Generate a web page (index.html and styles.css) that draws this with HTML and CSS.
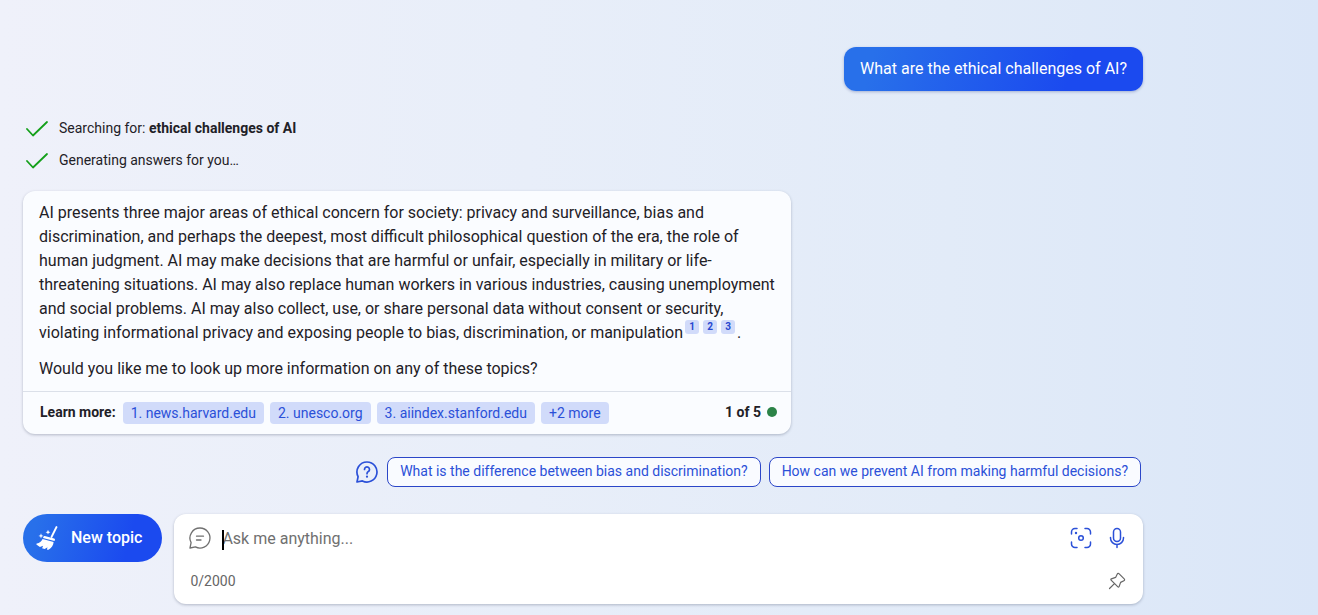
FILE: index.html
```html
<!DOCTYPE html>
<html lang="en">
<head>
<meta charset="utf-8">
<title>Chat</title>
<link rel="stylesheet" href="styles.css">
</head>
<body>
<main class="chat">
  <div class="user-message">What are the ethical challenges of AI?</div>

  <ul class="steps">
    <li class="step">
      <svg class="check" viewBox="0 0 24 18" aria-hidden="true"><path d="M1 10l6 6.500L21 3"/></svg>
      <span>Searching for: <strong>ethical challenges of AI</strong></span>
    </li>
    <li class="step">
      <svg class="check" viewBox="0 0 24 18" aria-hidden="true"><path d="M1 10l6 6.500L21 3"/></svg>
      <span>Generating answers for you…</span>
    </li>
  </ul>

  <article class="answer">
    <div class="answer-body">
      <p>AI presents three major areas of ethical concern for society: privacy and surveillance, bias and discrimination, and perhaps the deepest, most difficult philosophical question of the era, the role of human judgment. AI may make decisions that are harmful or unfair, especially in military or life-threatening situations. AI may also replace human workers in various industries, causing unemployment and social problems. AI may also collect, use, or share personal data without consent or security, violating informational privacy and exposing people to bias, discrimination, or manipulation<sup class="cites"><a class="cite" href="#">1</a><a class="cite" href="#">2</a><a class="cite" href="#">3</a></sup>.</p>
      <p>Would you like me to look up more information on any of these topics?</p>
    </div>
    <footer class="answer-footer">
      <strong class="learn">Learn more:</strong>
      <a class="source" href="#">1. news.harvard.edu</a>
      <a class="source" href="#">2. unesco.org</a>
      <a class="source" href="#">3. aiindex.stanford.edu</a>
      <button class="source" type="button">+2 more</button>
      <span class="turns">1 of 5<span class="dot"></span></span>
    </footer>
  </article>

  <div class="suggestions">
    <svg class="help" viewBox="0 0 24 24" aria-hidden="true"><path d="M12 2a10 10 0 1 1-4.600 18.900L2 22l1.100-5.400A10 10 0 0 1 12 2z"/><path d="M9.500 9.500a2.500 2.500 0 1 1 3.800 2.100c-.8.500-1.300 1-1.300 2.100"/><circle class="fill" cx="12" cy="16.700" r="1.100"/></svg>
    <button class="suggestion" type="button">What is the difference between bias and discrimination?</button>
    <button class="suggestion" type="button">How can we prevent AI from making harmful decisions?</button>
  </div>

  <form class="composer">
    <button class="new-topic" type="button">
      <svg class="broom" viewBox="0 0 26 26" aria-hidden="true"><path class="handle" d="M21.500 2L16.500 12"/><path class="fill" d="M9.800 10.900l9.300 2.600c.7.300 1 .8.800 1.500l-.4 1.100-11.500-3.200.4-1.200c.3-.6.800-.9 1.400-.8z"/><path class="fill" d="M7.600 14l11 3.100c-.2 2.900-1.800 5.700-4.700 7.400-.7.500-1.400.4-2 0l.6-2.200-2.800 1.700-2.600-.8 1-2.400-3.200 1.200-3.200-2.200c-.6-.5-.5-1.100.2-1.200 2.600-.5 4.400-1.900 5.700-4.600z"/><path class="fill" d="M13 4.800l.7 1.700 1.700.7-1.700.7-.7 1.700-.7-1.700-1.700-.7 1.700-.7zM6 8.300l.7 1.900 1.900.7-1.900.7-.7 1.900-.7-1.900-1.900-.7 1.900-.7z"/></svg>
      New topic
    </button>
    <div class="box">
      <div class="row">
        <svg class="icon muted" viewBox="2 1 22 22" aria-hidden="true"><path d="M12 2a10 10 0 1 1-4.600 18.900L2 22l1.100-5.400A10 10 0 0 1 12 2zM8.500 10.200h7M8.500 14h4.500"/></svg>
        <div class="field"><input class="prompt" type="text" aria-label="Ask me anything" placeholder="Ask me anything..."></div>
        <button class="tool" type="button" aria-label="Search by image"><svg class="icon" viewBox="0 0 24 24"><path d="M2.500 8V6A3.500 3.500 0 0 1 6 2.500H8M16 2.500h2A3.500 3.500 0 0 1 21.500 6V8M21.500 16v2a3.500 3.500 0 0 1-3.500 3.500H16M8 21.500H6A3.500 3.500 0 0 1 2.500 18V16"/><circle cx="12" cy="12" r="2.300"/><circle class="fill" cx="7" cy="7" r="1.200"/></svg></button>
        <button class="tool" type="button" aria-label="Use microphone"><svg class="icon" viewBox="0 0 24 24"><rect x="8.500" y="2.500" width="7" height="13" rx="3.500"/><path d="M5.500 11.500v.5a6.500 6.500 0 0 0 13 0v-.5M12 18.500v3"/></svg></button>
      </div>
      <div class="row row-end">
        <span class="count">0/2000</span>
        <button class="tool" type="button" aria-label="Pin"><svg class="pin" viewBox="0 0 20 20"><path d="M12.200 2.800l5 5c.7.700.5 1.500-.3 1.900l-3.300 1.700-1.500 4.200c-.2.600-.8.700-1.200.3L4.100 9.100c-.4-.4-.3-1 .3-1.200l4.200-1.500 1.700-3.300c.4-.8 1.200-1 1.900-.3zM7.200 12.800L2.500 17.500"/></svg></button>
      </div>
    </div>
  </form>
</main>
</body>
</html>
```
FILE: styles.css
```css
* { box-sizing: border-box; }
body {
  margin: 0;
  min-height: 100vh;
  background: linear-gradient(90deg, #eff1fa 0%, #e8eef9 40%, #e2ebf8 72%, #dae6f8 100%);
  color: #1f2127;
  font: 16px/24px Roboto, sans-serif;
}
button, input { font: inherit; color: inherit; border: 0; padding: 0; background: none; }
a { text-decoration: none; }
svg { flex: none; fill: none; stroke: currentColor; stroke-linecap: round; stroke-linejoin: round; }
.fill { fill: currentColor; stroke: none; }

.chat { display: flex; flex-direction: column; padding: 47px 175px 11px 23px; }
.user-message {
  align-self: flex-end;
  padding: 10px 16px;
  border-radius: 12px;
  background: linear-gradient(105deg, #2870ea 10%, #1b4aef 75%);
  color: #fff;
  box-shadow: 0 1px 3px rgba(20, 40, 120, .3);
}
.steps { display: flex; flex-direction: column; gap: 12px; margin: 27px 0 21px; padding: 0 3px; list-style: none; font-size: 14px; line-height: 20px; }
.step { display: flex; align-items: center; gap: 9px; }
.check { width: 24px; height: 18px; stroke: #14a01a; stroke-width: 1.8; }

.answer {
  width: 768px;
  max-width: 100%;
  border-radius: 12px;
  background: #fafcff;
  box-shadow: 0 1px 3px rgba(30, 40, 70, .28);
}
.answer-body { padding: 10px 16px; }
.answer-body p { margin: 0 0 12px; }
.answer-body p:last-child { margin: 0; }
.cites { display: inline-flex; gap: 4px; margin: -4px 2px; vertical-align: 8px; line-height: 14px; }
.cite { width: 14px; border-radius: 3px; background: #d1dbfa; color: #2747d0; font-size: 10px; font-weight: 700; text-align: center; }
.answer-footer { display: flex; align-items: center; gap: 6px; padding: 9px 14px; border-top: 1px solid #dbe0e9; font-size: 14px; }
.learn { margin: 0 1px 0 3px; }
.answer-footer > * { padding-bottom: 2px; line-height: 22px; }
.source { padding: 0 8px; border-radius: 4px; background: #d1dbfa; color: #2b50d8; }
.turns { display: flex; align-items: center; gap: 6px; margin-left: auto; font-weight: 700; }
.dot { width: 10px; height: 10px; border-radius: 50%; background: #2b8347; }

.suggestions { display: flex; align-items: center; justify-content: flex-end; gap: 8px; margin: 23px 2px 27px 0; color: #2b50d8; font-size: 14px; }
.help { width: 24px; height: 24px; stroke-width: 1.7; }
.suggestion { height: 30px; padding: 0 12px 2px; border: 1px solid #2b46c8; border-radius: 8px; background: #f9fbff; line-height: 26px; }

.composer { display: flex; align-items: flex-start; gap: 12px; }
.new-topic { display: flex; align-items: center; gap: 10px; height: 48px; padding: 0 20px 0 12px; border-radius: 24px; background: linear-gradient(105deg, #2870ea 10%, #1b4aef 75%); color: #fff; font-weight: 500; white-space: nowrap; }
.broom { width: 26px; height: 26px; stroke-width: 0; }
.handle { stroke-width: 1.8; }
.box { flex: 1; display: flex; flex-direction: column; gap: 21px; padding: 12px 14px 13px 16px; border-radius: 12px; background: #fff; box-shadow: 0 1px 3px rgba(30, 40, 70, .28); }
.row { display: flex; align-items: center; gap: 10px; color: #2b50d8; }
.row-end { justify-content: space-between; color: #666; font-size: 14px; line-height: 20px; }
.tool { margin-left: 2px; }
.icon { display: block; width: 24px; height: 24px; overflow: visible; stroke-width: 1.5; }
.muted { width: 22px; height: 22px; color: #707070; stroke-width: 1.3; }
.field { position: relative; flex: 1; display: flex; }
.field::before { content: ""; position: absolute; left: 0; top: 4px; width: 2px; height: 20px; background: #000; }
.prompt { flex: 1; min-width: 0; height: 24px; padding-top: 1px; outline: 0; color: #222; }
.prompt::placeholder { color: #707070; opacity: 1; }
.pin { display: block; width: 20px; height: 20px; margin-right: 2px; stroke-width: 1.2; }
```
